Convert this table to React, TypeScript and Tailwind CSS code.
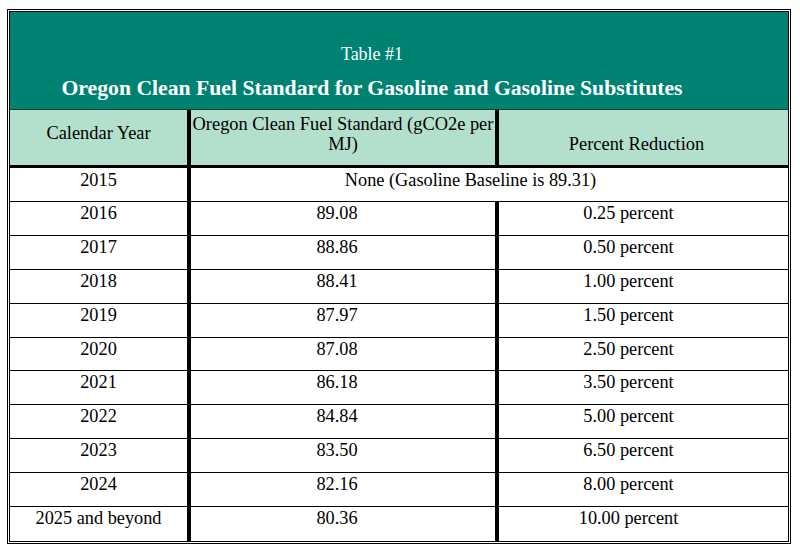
import React from "react";

const rows: [string, string, string][] = [
  ["2016", "89.08", "0.25 percent"],
  ["2017", "88.86", "0.50 percent"],
  ["2018", "88.41", "1.00 percent"],
  ["2019", "87.97", "1.50 percent"],
  ["2020", "87.08", "2.50 percent"],
  ["2021", "86.18", "3.50 percent"],
  ["2022", "84.84", "5.00 percent"],
  ["2023", "83.50", "6.50 percent"],
  ["2024", "82.16", "8.00 percent"],
  ["2025 and beyond", "80.36", "10.00 percent"],
];

export default function App() {
  return (
    <div className="w-[800px] h-[555px] bg-white pl-[7px] pt-[9px] text-black font-['Liberation_Serif','Times_New_Roman',serif]">
      <div className="w-[784px] h-[535px] border-[3px] border-double border-black flex flex-col">
        <div className="h-[98px] bg-[#008272] border-b border-[#1c3b35] flex flex-col items-center pr-[54px] text-white">
          <div className="mt-[31px] text-[18px] leading-[22px]">Table #1</div>
          <div className="mt-[11px] text-[21.7px] leading-[25px] font-bold">
            Oregon Clean Fuel Standard for Gasoline and Gasoline Substitutes
          </div>
        </div>
        <div className="h-[58px] bg-[#b3dfcd] border-b-[3px] border-black grid grid-cols-[181px_308px_1fr] text-[18.4px] leading-[20px]">
          <div className="border-r-4 border-black flex items-start justify-center pt-[13px]">Calendar Year</div>
          <div className="border-r-4 border-black text-center pt-[4px]">
            Oregon Clean Fuel Standard (gCO2e per MJ)
          </div>
          <div className="flex justify-center pt-[24px] pr-[14px]">Percent Reduction</div>
        </div>
        <div className="flex-1 grid grid-rows-11 text-[18.3px] leading-[20px]">
          <div className="grid grid-cols-[181px_1fr] border-b border-black">
            <div className="border-r-4 border-black flex justify-center pt-[2px]">2015</div>
            <div className="flex justify-center pt-[2px] pr-[38px]">None (Gasoline Baseline is 89.31)</div>
          </div>
          {rows.map(([y, v, p], i) => (
            <div
              key={y}
              className={
                "grid grid-cols-[181px_308px_1fr]" + (i < rows.length - 1 ? " border-b border-black" : "")
              }
            >
              <div className="border-r-4 border-black flex justify-center pt-[1px]">{y}</div>
              <div className="border-r-4 border-black flex justify-center pt-[1px] pr-[12px]">{v}</div>
              <div className="flex justify-center pt-[1px] pr-[30px]">{p}</div>
            </div>
          ))}
        </div>
      </div>
    </div>
  );
}
